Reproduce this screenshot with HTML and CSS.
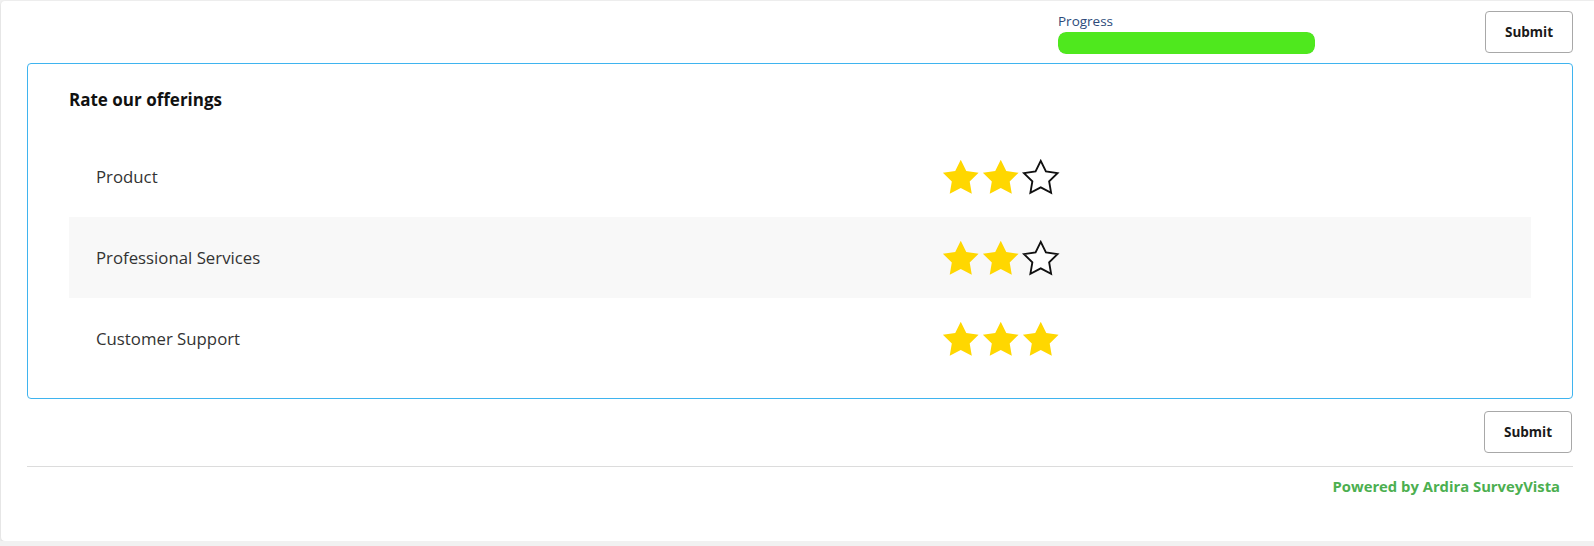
FILE: index.html
```html
<!DOCTYPE html>
<html lang="en">
<head>
<meta charset="utf-8">
<title>Survey</title>
<link rel="stylesheet" href="styles.css">
</head>
<body>
<div class="card">
  <header class="topbar">
    <div class="progress">
      <div class="progress-label">Progress</div>
      <div class="progress-track"><div class="progress-fill" style="width:100%"></div></div>
    </div>
    <button class="btn">Submit</button>
  </header>

  <section class="question">
    <h2 class="question-title">Rate our offerings</h2>
    <div class="rows">
      <div class="row">
        <span class="row-label">Product</span>
        <div class="stars">
          <svg class="star on" viewBox="1 1 22 21"><path d="M12 2l3.09 6.26L22 9.27l-5 4.87 1.18 6.88L12 17.77l-6.18 3.25L7 14.14 2 9.27l6.91-1.01z"/></svg>
          <svg class="star on" viewBox="1 1 22 21"><path d="M12 2l3.09 6.26L22 9.27l-5 4.87 1.18 6.88L12 17.77l-6.18 3.25L7 14.14 2 9.27l6.91-1.01z"/></svg>
          <svg class="star off" viewBox="1 1 22 21"><path d="M12 2.6l2.9 5.9 6.5.95-4.7 4.6 1.1 6.45L12 17.45l-5.8 3.05 1.1-6.45-4.7-4.6 6.5-.95z"/></svg>
        </div>
      </div>
      <div class="row alt">
        <span class="row-label">Professional Services</span>
        <div class="stars">
          <svg class="star on" viewBox="1 1 22 21"><path d="M12 2l3.09 6.26L22 9.27l-5 4.87 1.18 6.88L12 17.77l-6.18 3.25L7 14.14 2 9.27l6.91-1.01z"/></svg>
          <svg class="star on" viewBox="1 1 22 21"><path d="M12 2l3.09 6.26L22 9.27l-5 4.87 1.18 6.88L12 17.77l-6.18 3.25L7 14.14 2 9.27l6.91-1.01z"/></svg>
          <svg class="star off" viewBox="1 1 22 21"><path d="M12 2.6l2.9 5.9 6.5.95-4.7 4.6 1.1 6.45L12 17.45l-5.8 3.05 1.1-6.45-4.7-4.6 6.5-.95z"/></svg>
        </div>
      </div>
      <div class="row">
        <span class="row-label">Customer Support</span>
        <div class="stars">
          <svg class="star on" viewBox="1 1 22 21"><path d="M12 2l3.09 6.26L22 9.27l-5 4.87 1.18 6.88L12 17.77l-6.18 3.25L7 14.14 2 9.27l6.91-1.01z"/></svg>
          <svg class="star on" viewBox="1 1 22 21"><path d="M12 2l3.09 6.26L22 9.27l-5 4.87 1.18 6.88L12 17.77l-6.18 3.25L7 14.14 2 9.27l6.91-1.01z"/></svg>
          <svg class="star on" viewBox="1 1 22 21"><path d="M12 2l3.09 6.26L22 9.27l-5 4.87 1.18 6.88L12 17.77l-6.18 3.25L7 14.14 2 9.27l6.91-1.01z"/></svg>
        </div>
      </div>
    </div>
  </section>

  <div class="actions">
    <button class="btn">Submit</button>
  </div>

  <footer class="footer">
    <span class="powered">Powered by Ardira SurveyVista</span>
  </footer>
</div>
</body>
</html>
```

FILE: styles.css
```css
* { box-sizing: border-box; }

html, body {
  margin: 0;
  padding: 0;
}

body {
  background: #f1f1f1;
  font-family: "Open Sans", "Noto Sans", "Liberation Sans", sans-serif;
  color: #333;
  overflow: hidden;
}

.card {
  margin: 1px 0 0 1px;
  height: 540px;
  background: #fff;
  border-radius: 4px 0 0 4px;
  box-shadow: 0 1px 3px rgba(0, 0, 0, 0.12);
  padding: 0 21px 0 26px;
}

.topbar {
  height: 62px;
  display: flex;
  justify-content: flex-end;
  align-items: flex-start;
  padding-top: 10px;
}

.progress {
  width: 257px;
  margin-right: 170px;
  padding-top: 1px;
}

.progress-label {
  font-size: 13.5px;
  line-height: 19px;
  color: #2c4a7a;
  height: 20px;
}

.progress-track {
  height: 22px;
  border-radius: 8px;
  background: #e8e8e8;
  overflow: hidden;
}

.progress-fill {
  height: 100%;
  background: #4fe81e;
  border-radius: 8px;
}

.btn {
  width: 88px;
  height: 42px;
  background: #fff;
  border: 1px solid #a8a8a8;
  border-radius: 4px;
  font-family: "Open Sans", "Noto Sans", "Liberation Sans", sans-serif;
  font-weight: 700;
  font-size: 13.5px;
  color: #1a1a1a;
  padding: 0;
}

.question {
  border: 1px solid #3fb4ef;
  border-radius: 4px;
  height: 336px;
  padding: 24px 41px 0;
}

.question-title {
  margin: 0;
  font-size: 17px;
  line-height: 24px;
  font-weight: 700;
  color: #111;
}

.rows {
  margin-top: 24px;
}

.row {
  height: 81px;
  display: grid;
  grid-template-columns: 845px auto;
  align-items: center;
  padding: 0 27px;
}

.row.alt {
  background: #f8f8f8;
}

.row-label {
  font-size: 16.8px;
  color: #333;
}

.stars {
  display: flex;
  gap: 0.5px;
  align-items: center;
}

.star {
  width: 39.5px;
  height: 37.5px;
  display: block;
}

.star.on path {
  fill: #ffd700;
}

.star.off path {
  fill: #fff;
  stroke: #111;
  stroke-width: 1.05;
  stroke-linejoin: miter;
}

.actions {
  display: flex;
  justify-content: flex-end;
  padding-top: 12px;
  padding-right: 1px;
  height: 67px;
}

.footer {
  border-top: 1px solid #dcdcdc;
  display: flex;
  justify-content: flex-end;
  padding: 8px 13px 0 0;
}

.powered {
  font-size: 14.8px;
  line-height: 22px;
  font-weight: 700;
  color: #4caf50;
}
```
